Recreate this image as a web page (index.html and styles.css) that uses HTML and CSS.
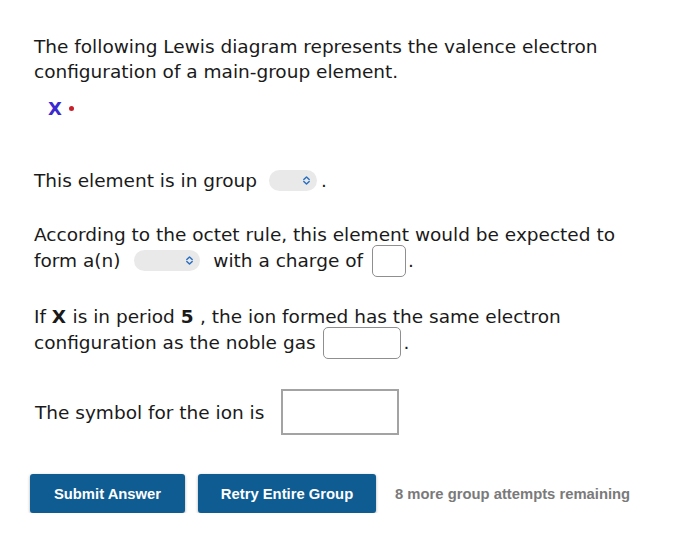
FILE: index.html
```html
<!DOCTYPE html>
<html>
<head>
<meta charset="utf-8">
<link rel="stylesheet" href="styles.css">
</head>
<body>
<div class="page">
  <p class="intro">The following Lewis diagram represents the valence electron configuration of a main-group element.</p>
  <div class="lewis"><span class="sym">X</span><span class="dot"></span></div>

  <p class="q q-group">This element is in group <span class="select sel-group"><svg class="chev" viewBox="0 0 10 12" width="9" height="11"><path d="M2 5 L5 2 L8 5 M2 7 L5 10 L8 7" fill="none" stroke="#2a6fc0" stroke-width="1.6" stroke-linecap="round" stroke-linejoin="round"/></svg></span>.</p>

  <p class="q q-octet">According to the octet rule, this element would be expected to form a(n) <span class="select sel-ion"><svg class="chev" viewBox="0 0 10 12" width="9" height="11"><path d="M2 5 L5 2 L8 5 M2 7 L5 10 L8 7" fill="none" stroke="#2a6fc0" stroke-width="1.6" stroke-linecap="round" stroke-linejoin="round"/></svg></span> with a charge of <span class="box box-charge"></span>.</p>

  <p class="q q-period">If <b class="strong">X</b> is in period <b class="strong">5</b> , the ion formed has the same electron configuration as the noble gas <span class="box box-gas"></span>.</p>

  <div class="symbol-row"><span>The symbol for the ion is</span><span class="box-symbol"></span></div>

  <div class="actions">
    <button class="btn">Submit Answer</button>
    <button class="btn btn-retry">Retry Entire Group</button>
    <span class="remaining">8 more group attempts remaining</span>
  </div>
</div>
</body>
</html>
```
FILE: styles.css
```css
html, body { margin: 0; padding: 0; background: #fff; }
body {
  font-family: "DejaVu Sans", Verdana, sans-serif;
  font-size: 18.5px;
  color: #1a1a1a;
}
.page { padding: 34px 30px 0 34px; width: 620px; }
p { margin: 0; line-height: 25px; }
.intro { width: 580px; }
.lewis { display: flex; align-items: center; height: 28px; margin-top: 10px; padding-left: 14px; }
.sym { color: #3a2ad0; font-weight: bold; font-size: 18px; }
.dot { width: 5px; height: 5px; border-radius: 50%; background: #c8202a; margin-left: 7px; }
.q { line-height: 26px; }
.q-group { margin-top: 46px; }
.q-octet { margin-top: 28px; width: 600px; }
.q-period { margin-top: 30px; width: 560px; }
.strong { letter-spacing: 0.5px; }
.select {
  display: inline-flex; align-items: center; justify-content: flex-end;
  height: 21px; border-radius: 11px; background: #e9e9ea;
  vertical-align: middle; padding-right: 6px; box-sizing: border-box;
  margin: -4px 2px 0 4px;
}
.sel-group { width: 48px; margin-left: 6px; margin-right: 4px; }
.sel-ion { width: 66px; margin-left: 8px; margin-right: 7px; }
.chev { display: block; }
.box {
  display: inline-block; box-sizing: border-box; vertical-align: middle;
  border: 1px solid #8f8f8f; border-radius: 5px; background: #fff;
  height: 32px; margin: -6px 2px -4px 4px;
}
.box-charge { width: 34px; margin-left: 3px; }
.box-gas { width: 78px; margin-left: 2px; }
.symbol-row { display: flex; align-items: center; gap: 17px; margin-top: 33px; padding-left: 1px; }
.box-symbol { display: block; width: 118px; height: 46px; box-sizing: border-box; border: 2px solid #a3a3a3; }
.actions { display: flex; align-items: center; margin-top: 39px; margin-left: -4px; }
.btn {
  font-family: "Liberation Sans", Arial, sans-serif; font-weight: bold; font-size: 14.8px;
  color: #fff; background: #0e5c92; border: none; border-radius: 3px;
  height: 39px; width: 155px; box-shadow: 0 1px 3px rgba(0,0,0,0.35);
  padding: 0; margin-right: 13px;
}
.btn-retry { width: 178px; margin-right: 19px; }
.remaining { font-family: "Liberation Sans", Arial, sans-serif; font-weight: bold; font-size: 14.8px; color: #7a7a7a; }
```
